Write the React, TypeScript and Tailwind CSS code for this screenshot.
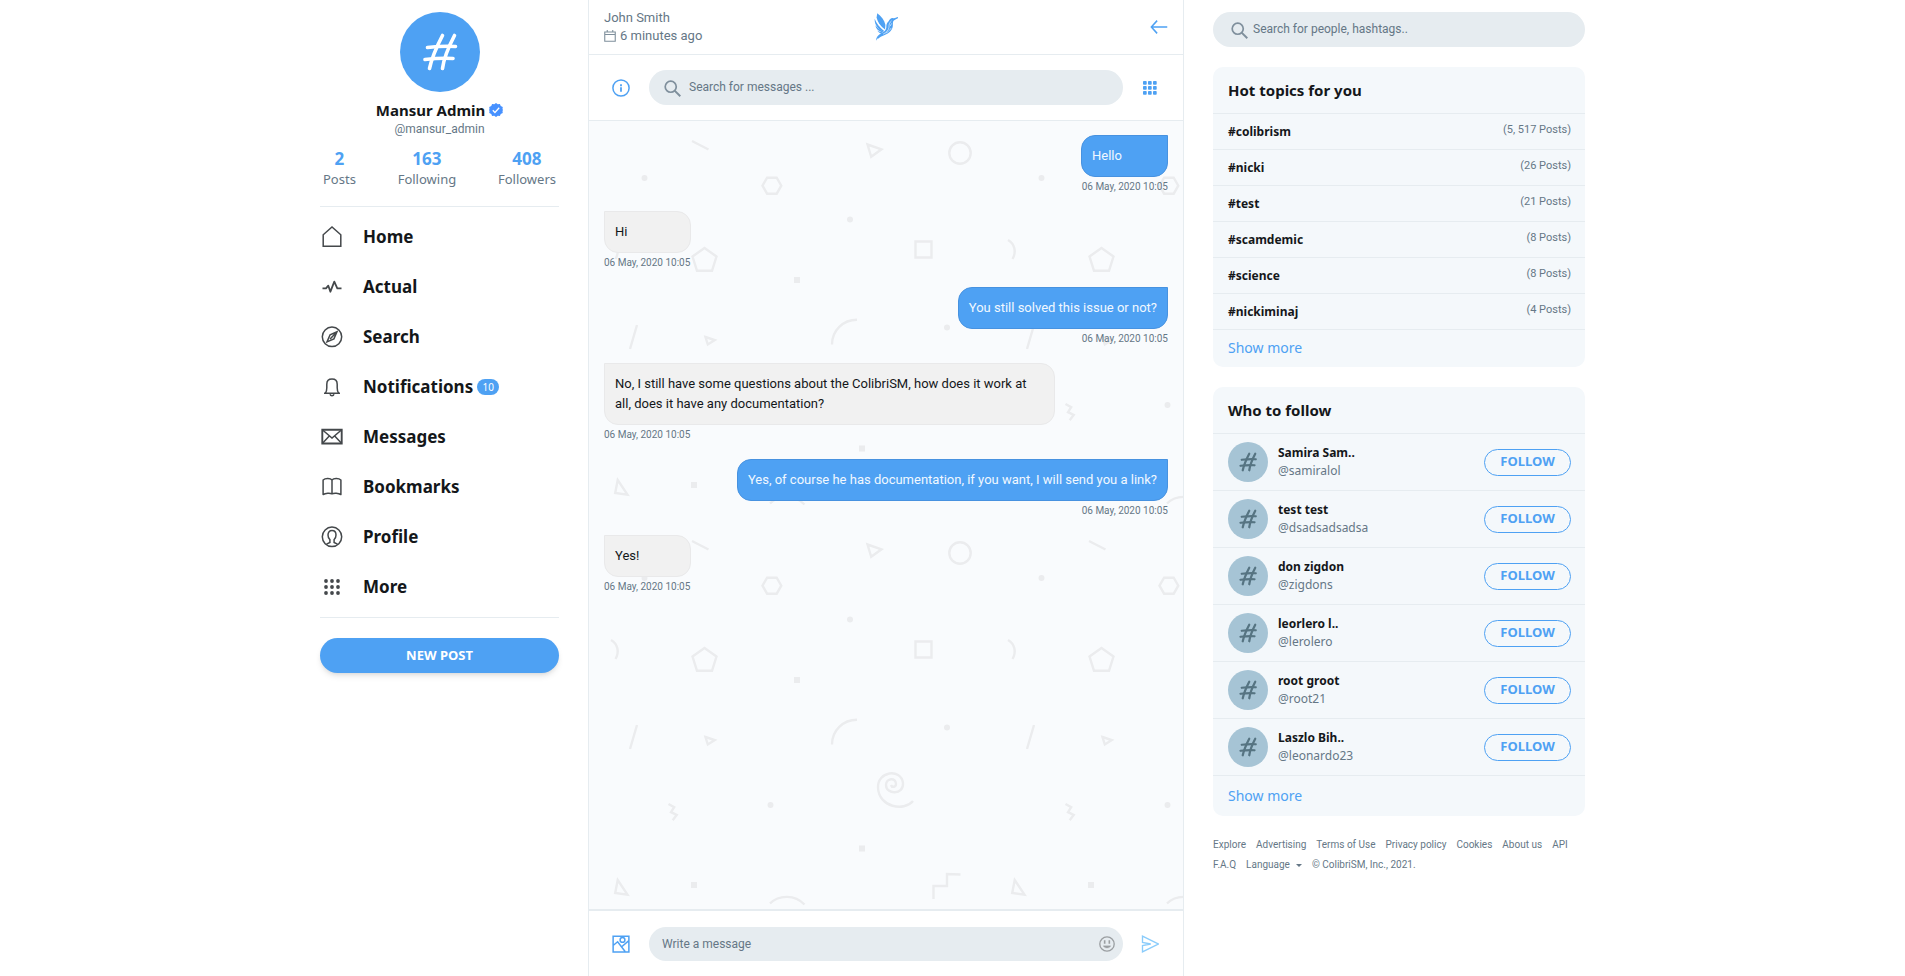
import React, { useState } from 'react';

type IconProps = { className?: string };

type Message = { text: string; date: string; mine: boolean };

const stats = [
  { value: '2', label: 'Posts' },
  { value: '163', label: 'Following' },
  { value: '408', label: 'Followers' },
];

const messages: Message[] = [
  { text: 'Hello', date: '06 May, 2020 10:05', mine: true },
  { text: 'Hi', date: '06 May, 2020 10:05', mine: false },
  { text: 'You still solved this issue or not?', date: '06 May, 2020 10:05', mine: true },
  { text: 'No, I still have some questions about the ColibriSM, how does it work at all, does it have any documentation?', date: '06 May, 2020 10:05', mine: false },
  { text: 'Yes, of course he has documentation, if you want, I will send you a link?', date: '06 May, 2020 10:05', mine: true },
  { text: 'Yes!', date: '06 May, 2020 10:05', mine: false },
];

const topics = [
  { tag: '#colibrism', count: '5, 517' },
  { tag: '#nicki', count: '26' },
  { tag: '#test', count: '21' },
  { tag: '#scamdemic', count: '8' },
  { tag: '#science', count: '8' },
  { tag: '#nickiminaj', count: '4' },
];

const people = [
  { name: 'Samira Sam..', handle: '@samiralol' },
  { name: 'test test', handle: '@dsadsadsadsa' },
  { name: 'don zigdon', handle: '@zigdons' },
  { name: 'leorlero l..', handle: '@lerolero' },
  { name: 'root groot', handle: '@root21' },
  { name: 'Laszlo Bih..', handle: '@leonardo23' },
];

const footerLinks = ['Explore', 'Advertising', 'Terms of Use', 'Privacy policy', 'Cookies', 'About us', 'API', 'F.A.Q'];

const Line = ({ className, children }: IconProps & { children: React.ReactNode }) => (
  <svg viewBox="0 0 24 24" fill="none" stroke="currentColor" strokeWidth="1.5" className={className} aria-hidden="true">
    {children}
  </svg>
);

const navItems = [
  { label: 'Home', icon: <path d="M3.2 21.2V9.8L12 2l8.8 7.8v11.4z" /> },
  { label: 'Actual', icon: <path d="M2.5 13.3H6l2.3-2.6 2.1 6 3.9-10 3 6.6h4.2" strokeLinejoin="round" strokeWidth="1.8" /> },
  {
    label: 'Search',
    icon: (
      <>
        <circle cx="12" cy="11.8" r="9.7" />
        <path d="M17 6.7l-3.1 7.2-6.9 3 3.1-7.1zM17 6.7l-6.9 7.2" />
      </>
    ),
  },
  {
    label: 'Notifications',
    icon: (
      <>
        <path d="M4 18.2h16M5.4 18c1.2-1.4 1.4-3 1.4-5.2V9.2C6.8 5.8 8.8 4 12 4s5.2 1.8 5.2 5.2v3.6c0 2.2.2 3.8 1.4 5.2" />
        <path d="M10 19.3c.3.9 1 1.4 2 1.4s1.7-.5 2-1.4" />
      </>
    ),
  },
  {
    label: 'Messages',
    icon: (
      <>
        <path d="M2.3 4.7h19.4v13.8H2.3z" strokeWidth="1.9" />
        <path d="M2.3 4.7L12 13l9.700-8.300M2.300 18.500l7-7.600M21.700 18.500l-7-7.600" />
      </>
    ),
  },
  {
    label: 'Bookmarks',
    icon: <path d="M12 5v13.500M12 5c-1.500-1.700-6.500-2.200-8.900 0v14.500c2.400-1.500 7-1.700 8.900-.7 1.900-1 6.500-.8 8.900.7V5c-2.400-2.200-7.400-1.700-8.900 0z" strokeLinejoin="round" />,
  },
  {
    label: 'Profile',
    icon: (
      <>
        <circle cx="12" cy="11.8" r="9.7" />
        <path d="M6.500 19.200l3.400-1.700v-2.800c-1.300-1-1.900-2.700-1.900-4.600C8 7.200 9.500 5.600 12 5.600s4 1.600 4 4.500c0 1.900-.6 3.600-1.900 4.600v2.800l3.400 1.700" />
      </>
    ),
  },
  {
    label: 'More',
    icon: (
      <g fill="currentColor" stroke="none">
        {[6, 12, 18].map(y => [6, 12, 18].map(x => <circle key={`${x}-${y}`} cx={x} cy={y} r="1.9" />))}
      </g>
    ),
  },
];

const Bird = ({ className }: IconProps) => (
  <svg viewBox="0 0 76 86" className={className} aria-hidden="true">
    <g fill="#4ea1f3">
      <path d="M10 1c13 10 22 21 25 35l-1 15C24 44 12 31 8 14z" />
      <path d="M2 18c5 14 15 26 30 38l-4 1C14 50 1 38 2 18z" />
      <path d="M4 38c6 8 14 14 25 18l-4 3C14 57 6 49 4 38z" />
      <path d="M10 54c5 3 10 5 15 5l3 4c-8 1-14-3-18-9z" />
      <path d="M38 44c-1-8 2-14 7-19 3-8 11-13 17-8l13-4v2l-14 8c-3 3-3 7-3 13 0 14-8 24-22 30-12 5-20 8-25 15 0-11 7-17 15-21 8-4 11-8 12-16z" />
      <path d="M6 85c1-11 6-17 13-20-4 7-8 12-13 20z" />
    </g>
    <path d="M54 24c-7 5-8 12-8 20-1 9-8 16-18 21M50 40l4-8M47 54l6-8M36 62l9-6" stroke="#fff" strokeWidth="1.8" fill="none" />
    <path d="M60 18l14-4" stroke="#4ea1f3" strokeWidth="2.5" />
  </svg>
);

const SearchIcon = ({ className }: IconProps) => (
  <Line className={className}>
    <circle cx="9.5" cy="9.5" r="7.8" strokeWidth="2.4" />
    <path d="M15 15l8 8" strokeWidth="2.8" />
  </Line>
);

const Verified = () => (
  <svg viewBox="0 0 24 24" className="size-3.5" role="img" aria-label="Verified">
    <path
      fill="#4791ff"
      d="M12 0l3 2.300 3.700-.5 1.400 3.500 3.500 1.400-.5 3.700L24 12l-.9 1.600.5 3.700-3.500 1.400-1.400 3.500-3.700-.5L12 24l-3-2.300-3.700.5-1.400-3.500-3.500-1.400.5-3.700L0 12l.9-1.600-.5-3.700 3.500-1.400 1.400-3.500 3.700.5z"
    />
    <path d="M6.500 12.500l3.700 3.700 7.300-8" fill="none" stroke="#fff" strokeWidth="2.200" />
  </svg>
);

const HashAvatar = ({ className }: IconProps) => (
  <svg viewBox="0 0 80 80" className={className} aria-hidden="true">
    <g fill="none" stroke="currentColor" strokeLinecap="round">
      <path d="M42.500 23.500C37 34 32 45 29.500 56.500M54.500 23.500C49 34 44 45 42.500 56.500" />
      <path d="M27.500 35.500c9-1 19-1.500 28-1M25 47.500c9-1 19-1.500 28-1" />
    </g>
  </svg>
);

// Tiled doodles behind the conversation
const ChatPattern = () => (
  <svg className="absolute inset-0 size-full" aria-hidden="true">
    <defs>
      <pattern id="doodles" x="-1" y="-1" width="397" height="400" patternUnits="userSpaceOnUse">
        <g fill="none" stroke="#ebecee" strokeWidth="2.4">
          <path d="M104 21l16.500 8.500" />
          <path d="M279.500 24.500l14 4.800-10.300 7.500z" />
          <circle cx="372" cy="33" r="10.700" />
          <path d="M174.500 65.700l4.600-8h9.600l4.600 8-4.600 8h-9.600z" />
          <path d="M327.500 121.500h16v16h-16z" />
          <path d="M116.500 128l12 8.500-4.500 14.300h-15l-4.500-14.300z" />
          <path d="M23 120c7 4 8.500 12 4.500 19" />
          <path d="M49 205l-7 24" />
          <path d="M117.500 217l9.300 3-7 4.500z" />
          <path d="M244 224.500c0-14 11-24.800 25-24.800" />
          <path d="M80.500 284l5.700 3.200-3.200 5 5.700 2.800-4 5.200" />
          <path d="M325 281c-9 11-34 6-35-13-1-17 23-20 25-5 1 12-17 12-17 2 0-7 10-8 10-1 0 3-4 4-5 1" />
          <path d="M29.700 360l9.800 14.700-12.300-1.700z" />
          <path d="M182 383.500c9-9 25-9 34.500 1" />
          <path d="M345.500 379v-13H359v-12l13.500.5" />
        </g>
        <g fill="#ebecee">
          <circle cx="56.500" cy="58" r="3" />
          <circle cx="262" cy="99.500" r="3" />
          <circle cx="359" cy="207.500" r="3" />
          <circle cx="182.500" cy="285" r="3" />
          <path d="M206 157h6v6h-6zM271 325.500h6v6h-6zM103 362h6v6h-6z" />
        </g>
      </pattern>
    </defs>
    <rect width="100%" height="100%" fill="url(#doodles)" />
  </svg>
);

const Sidebar = () => (
  <aside className="w-[239px] shrink-0 pt-3">
    <div className="flex flex-col items-center">
      <HashAvatar className="size-20 rounded-full bg-[#4ea1f3] stroke-[3.600] text-white" />
      <div className="mt-2 flex items-center gap-1 text-[15px] leading-5 font-bold text-[#14171a]">
        Mansur Admin <Verified />
      </div>
      <a href="#profile" className="font-['Roboto',sans-serif] text-xs leading-[18px] text-[#657786]">@mansur_admin</a>
    </div>
    <div className="mt-2.5 flex justify-between border-b border-[#e6ecf0] px-[3px] pb-[18px] text-center">
      {stats.map(s => (
        <a key={s.label} href="#stats" className="block">
          <span className="block text-[17px] leading-[22px] font-bold text-[#4ea1f3]">{s.value}</span>
          <span className="block text-[13px] leading-[18px] text-[#657786]">{s.label}</span>
        </a>
      ))}
    </div>
    <nav className="mt-[5px] border-b border-[#e6ecf0] pb-[5px]">
      {navItems.map(item => (
        <a key={item.label} href={`#${item.label.toLowerCase()}`} className="flex h-[50px] items-center text-[17px] font-bold text-[#14171a]">
          <Line className="mr-[19px] size-6 text-[#44484b]">{item.icon}</Line>
          {item.label}
          {item.label === 'Notifications' && (
            <span className="ml-1 flex h-4 w-[22px] items-center justify-center rounded-full bg-[#4ea1f3] text-[10px] font-normal text-white">10</span>
          )}
        </a>
      ))}
    </nav>
    <button className="mt-5 h-[35px] w-full rounded-full bg-[#4ea1f3] text-[13px] font-bold text-white shadow-md shadow-black/10">NEW POST</button>
  </aside>
);

const Bubble = ({ text, date, mine }: Message) => (
  <div className={`flex flex-col ${mine ? 'items-end' : 'items-start'}`}>
    <div
      className={`max-w-4/5 min-w-[87px] rounded-[14px] border px-2.5 py-2.5 text-[13px] leading-5 ${
        mine ? 'rounded-tr-none border-[#4792e0] bg-[#4ea1f3] text-[#f1f8ff]' : 'rounded-tl-none border-[#e9e9ea] bg-[#f1f1f1] text-[#14171a]'
      }`}
    >
      {text}
    </div>
    <time className="mt-0.5 text-[10px] leading-4 text-[#657786]">{date}</time>
  </div>
);

const Chat = () => {
  const [query, setQuery] = useState('');
  const [draft, setDraft] = useState('');

  return (
    <main className="flex h-screen min-w-0 flex-1 flex-col border-x border-[#e6ecf0] font-['Roboto',sans-serif]">
      <header className="grid h-[55px] shrink-0 grid-cols-3 items-center border-b border-[#e6ecf0] px-[15px] text-[13px] leading-[18px] text-[#657786]">
        <div>
          <div>John Smith</div>
          <div className="flex items-center gap-1">
            <Line className="size-3 text-[#7f8f9c]">
              <path d="M1.500 4h21v18.500h-21zM1.500 9h21M6.500 0v4M17.500 0v4" strokeWidth="2.200" />
            </Line>
            6 minutes ago
          </div>
        </div>
        <Bird className="h-7 justify-self-center" />
        <button className="justify-self-end text-[#4ea1f3]" aria-label="Back">
          <Line className="size-[18px]">
            <path d="M23 12H2M9.500 3.500L1.800 12l7.700 8.500" strokeWidth="2" />
          </Line>
        </button>
      </header>

      <div className="flex h-[66px] shrink-0 items-center border-b border-[#e6ecf0] px-[15px] text-[#4ea1f3]">
        <button className="flex w-[45px] justify-start pl-2" aria-label="Info">
          <Line className="size-[18px]">
            <circle cx="12" cy="12" r="10.800" strokeWidth="2" />
            <path d="M12 7v2.500M12 11v6" strokeWidth="2.400" />
          </Line>
        </button>
        <div className="relative flex-1">
          <SearchIcon className="absolute top-2.5 left-[15px] size-[17px] text-[#7f8f9c]" />
          <input
            value={query}
            onChange={e => setQuery(e.target.value)}
            aria-label="Search for messages"
            placeholder="Search for messages ..."
            className="block h-[35px] w-full rounded-full bg-[#e6ecf0] pr-4 pb-0.5 pl-10 text-xs text-[#14171a] outline-none placeholder:text-[#657786]"
          />
        </div>
        <button className="flex w-[45px] justify-end pr-[11px]" aria-label="Menu">
          <svg viewBox="0 0 14 14" fill="currentColor" className="size-3.5" aria-hidden="true">
            {[0, 5, 10].map(y => [0, 5, 10].map(x => <rect key={`${x}-${y}`} x={x} y={y} width="3.7" height="3.7" rx="0.8" />))}
          </svg>
        </button>
      </div>

      <div className="relative flex-1 overflow-hidden bg-[#f9fbfd]">
        <ChatPattern />
        <div className="relative flex flex-col gap-4 px-[15px] py-3.5">
          {messages.map(m => <Bubble key={m.text} {...m} />)}
        </div>
      </div>

      <form onSubmit={e => e.preventDefault()} className="flex h-[67px] shrink-0 items-center border-t-2 border-[#e6ecf0] px-[15px] text-[#4ea1f3]">
        <button type="button" className="flex w-[45px] justify-start pl-2" aria-label="Attach image">
          <Line className="size-[18px]">
            <path d="M1.500 1.500h21v21h-21zM1.500 14l6-5 10 13M12.500 16l10-8.500" strokeWidth="2" />
            <circle cx="14" cy="6.500" r="3.200" strokeWidth="2" />
          </Line>
        </button>
        <div className="relative flex-1">
          <input
            value={draft}
            onChange={e => setDraft(e.target.value)}
            aria-label="Write a message"
            placeholder="Write a message"
            className="block h-[34px] w-full rounded-full bg-[#e6ecf0] pr-10 pl-[13px] text-xs text-[#14171a] outline-none placeholder:text-[#657786]"
          />
          <button type="button" className="absolute inset-y-0 right-2 text-[#9b9fa2]" aria-label="Emoji">
            <Line className="size-4">
              <circle cx="12" cy="12" r="10.800" strokeWidth="2" />
              <path d="M8.500 6.500v5M15.500 6.500v5" strokeWidth="2.400" />
              <path d="M6.500 14.800h11c-1 4.200-10 4.200-11 0z" fill="currentColor" strokeWidth="0.500" />
            </Line>
          </button>
        </div>
        <button type="submit" className="flex w-[45px] justify-end pr-[9px] text-[#8accfb]" aria-label="Send">
          <Line className="size-[18px]">
            <path d="M2 1.500L23 12 2 22.500V14l11-2L2 10z" strokeWidth="1.800" />
          </Line>
        </button>
      </form>
    </main>
  );
};

const Card = ({ title, children }: { title: string; children: React.ReactNode }) => (
  <section className="mt-5 rounded-[10px] bg-[#f4f8fb]">
    <h2 className="h-[46px] px-[15px] text-[15px] leading-[46px] font-bold text-[#14171a]">{title}</h2>
    {children}
  </section>
);

const RightBar = () => {
  const [query, setQuery] = useState('');

  return (
    <aside className="w-[372px] shrink-0 pt-3">
      <div className="relative">
        <SearchIcon className="absolute top-2.5 left-[18px] size-[17px] text-[#7f8f9c]" />
        <input
          value={query}
          onChange={e => setQuery(e.target.value)}
          aria-label="Search for people, hashtags"
          placeholder="Search for people, hashtags.."
          className="block h-[35px] w-full rounded-full bg-[#e6ecf0] pr-4 pb-0.5 pl-10 font-['Roboto',sans-serif] text-xs text-[#14171a] outline-none placeholder:text-[#657786]"
        />
      </div>

      <Card title="Hot topics for you">
        <ul>
          {topics.map(t => (
            <li key={t.tag} className="flex h-9 items-center justify-between border-t border-[#e6ecf0] pr-3.5 pl-[15px]">
              <a href="#topic" className="text-xs font-bold text-[#14171a]">{t.tag}</a>
              <span className="pb-0.5 font-['Roboto',sans-serif] text-[11px] text-[#657786]">({t.count} Posts)</span>
            </li>
          ))}
        </ul>
        <div className="border-t border-[#e6ecf0] px-[15px]">
          <a href="#topics" className="block h-[37px] text-sm leading-9 text-[#4ea1f3]">Show more</a>
        </div>
      </Card>

      <Card title="Who to follow">
        <ul>
          {people.map(p => (
            <li key={p.handle} className="flex h-[57px] items-center border-t border-[#e6ecf0] pr-3.5 pl-[15px]">
              <HashAvatar className="size-10 rounded-full bg-[#a6c4d5] stroke-[4.500] text-[#567482]" />
              <div className="ml-2.5 flex-1 text-xs leading-[18px]">
                <div className="font-bold text-[#14171a]">{p.name}</div>
                <div className="text-[#657786]">{p.handle}</div>
              </div>
              <button className="h-[27px] w-[87px] rounded-full border border-[#4ea1f3] text-[13px] font-bold text-[#4ea1f3]">FOLLOW</button>
            </li>
          ))}
        </ul>
        <div className="border-t border-[#e6ecf0] px-[15px]">
          <a href="#people" className="block h-10 text-sm leading-10 text-[#4ea1f3]">Show more</a>
        </div>
      </Card>

      <footer className="mt-[19px] flex flex-wrap gap-x-2.5 font-['Roboto',sans-serif] text-[10px] leading-5 text-[#657786]">
        {footerLinks.map(l => <a key={l} href="#footer">{l}</a>)}
        <button className="flex items-center gap-1.5">
          Language
          <span className="border-x-[3px] border-t-[3px] border-x-transparent border-t-current" />
        </button>
        <span>© ColibriSM, Inc., 2021.</span>
      </footer>
    </aside>
  );
};

const App: React.FC = () => (
  <div className="min-h-screen bg-white font-['Noto_Sans',sans-serif]">
    <div className="mx-auto flex max-w-[1265px] items-start gap-[29px]">
      <Sidebar />
      <Chat />
      <RightBar />
    </div>
  </div>
);

export default App;
